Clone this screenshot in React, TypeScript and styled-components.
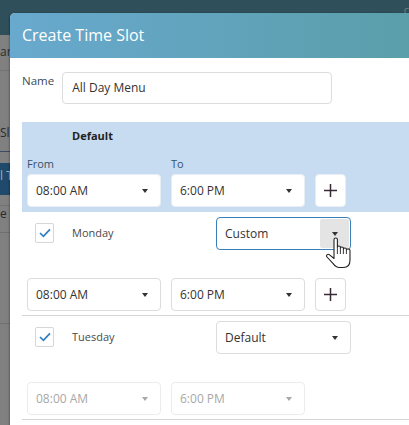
import React from 'react'
import styled, { createGlobalStyle } from 'styled-components'

const GlobalStyle = createGlobalStyle`
  html, body {
    margin: 0;
    padding: 0;
    background: #808080;
    font-family: 'Open Sans', 'Noto Sans', sans-serif;
  }
  * { box-sizing: border-box; }
`

const Page = styled.div`
  position: relative;
  width: 409px;
  height: 425px;
  overflow: hidden;
  background: #808080;
`

/* dimmed page behind the modal */
const TopBar = styled.div`
  height: 35px;
  background: #2f505b;
  display: flex;
  justify-content: flex-end;
  color: #6f8286;
  font-size: 11px;
  line-height: 20px;
`

const BackRow = styled.div<{ $h: number; $bg?: string; $line?: string }>`
  height: ${p => p.$h}px;
  background: ${p => p.$bg || 'transparent'};
  border-bottom: 1px solid ${p => p.$line || 'transparent'};
  font-size: 12px;
  color: ${p => (p.$bg ? '#9fb0bd' : '#2b2b2b')};
  display: flex;
  align-items: flex-end;
  padding-bottom: 10px;
  white-space: nowrap;
  overflow: hidden;
`

const Modal = styled.div`
  position: absolute;
  left: 10px;
  top: 13px;
  width: 420px;
  height: 440px;
  background: #fff;
  border-radius: 5px 0 0 0;
  box-shadow: -1px 0 2px rgba(0, 0, 0, 0.25);
`

const ModalHeader = styled.div`
  height: 45px;
  border-radius: 5px 0 0 0;
  background: linear-gradient(90deg, #68a9ce 0%, #5a9ea8 100%);
  color: #fff;
  font-size: 16px;
  line-height: 45px;
  padding-left: 12px;
`

const ModalBody = styled.div`
  padding: 14px 0 0 12px;
`

const NameRow = styled.div`
  display: flex;
  align-items: flex-start;
  gap: 8px;
  margin-bottom: 18px;
`

const NameLabel = styled.label`
  font-size: 11.5px;
  line-height: 16px;
  margin-top: 1px;
  color: #3b4a5a;
`

const NameInput = styled.div`
  width: 270px;
  height: 32px;
  border: 1px solid #dcdcdc;
  border-radius: 4px;
  font-size: 12px;
  line-height: 30px;
  padding-left: 9px;
  color: #333;
`

const DefaultSection = styled.div`
  background: #c7dcf0;
  height: 90px;
  padding: 6px 0 0 5px;
`

const DefaultTitle = styled.div`
  font-size: 11px;
  font-weight: 700;
  line-height: 16px;
  color: #222;
  padding-left: 45px;
  margin-bottom: 13px;
`

const FieldRow = styled.div`
  display: flex;
  align-items: flex-end;
  gap: 10px;
`

const Field = styled.div`
  display: flex;
  flex-direction: column;
  width: 134px;
`

const FieldLabel = styled.span`
  font-size: 11px;
  line-height: 14px;
  margin-bottom: 3px;
  color: #36516b;
`

const Select = styled.div<{ $w?: number; $focus?: boolean; $disabled?: boolean; $filled?: boolean }>`
  position: relative;
  width: ${p => p.$w || 134}px;
  height: 33px;
  background: #fff;
  border: 1px solid ${p => (p.$focus ? '#3a7fb8' : p.$disabled ? '#ececec' : p.$filled ? '#e8eef4' : '#dcdcdc')};
  border-radius: 4px;
  display: flex;
  align-items: center;
  justify-content: space-between;
  font-size: 12px;
  padding-left: 8px;
  color: ${p => (p.$disabled ? '#a8a8a8' : '#333')};
`

const Caret = styled.span<{ $hover?: boolean; $disabled?: boolean }>`
  align-self: stretch;
  width: 29px;
  margin: 1px 1px 1px 0;
  border-radius: 2px;
  background: ${p => (p.$hover ? '#e4e4e4' : 'transparent')};
  display: flex;
  align-items: center;
  justify-content: center;
  &::after {
    content: '';
    border-left: 3.5px solid transparent;
    border-right: 3.5px solid transparent;
    border-top: 4px solid ${p => (p.$disabled ? '#a8a8a8' : '#333')};
  }
`

const PlusButton = styled.button<{ $filled?: boolean }>`
  width: 31px;
  height: 33px;
  padding: 0;
  background: #fff;
  border: 1px solid ${p => (p.$filled ? '#e8eef4' : '#dcdcdc')};
  border-radius: 4px;
  display: flex;
  align-items: center;
  justify-content: center;
  color: #3a2a35;
`

const DayBlock = styled.div<{ $gap: number }>`
  border-bottom: 1px solid #d4d4d4;
  padding: 5px 0 4px 5px;
  display: flex;
  flex-direction: column;
  gap: ${p => p.$gap}px;
`

const DayHead = styled.div`
  display: flex;
  align-items: flex-start;
`

const CheckBox = styled.span`
  width: 19px;
  height: 20px;
  margin: 6px 0 0 8px;
  border: 1px solid #d6d6d6;
  border-radius: 2px;
  display: flex;
  align-items: center;
  justify-content: center;
  color: #2f7fc4;
`

const DayName = styled.span`
  width: 162px;
  padding-left: 18px;
  font-size: 11px;
  line-height: 16px;
  margin-top: 8px;
  color: #4a4a4a;
`

const HandCursor = styled.svg`
  position: absolute;
  left: 326px;
  top: 236px;
  width: 26px;
  height: 34px;
`

const PlusIcon = ({ filled }: { filled?: boolean }) => (
  <PlusButton $filled={filled}>
    <svg width="13" height="13" viewBox="0 0 13 13">
      <path d="M6.5 0v13M0 6.5h13" stroke="currentColor" strokeWidth="1.5" fill="none" />
    </svg>
  </PlusButton>
)

const Check = () => (
  <svg width="12" height="10" viewBox="0 0 12 10">
    <path d="M1 5 4.4 8.4 11 1.4" stroke="currentColor" strokeWidth="1.7" fill="none" />
  </svg>
)

const TimeRow = ({ disabled, plus = true }: { disabled?: boolean; plus?: boolean }) => (
  <FieldRow>
    <Select $disabled={disabled}>
      08:00 AM
      <Caret $disabled={disabled} />
    </Select>
    <Select $disabled={disabled}>
      6:00 PM
      <Caret $disabled={disabled} />
    </Select>
    {plus && <PlusIcon />}
  </FieldRow>
)

const App = () => {
  return (
    <Page>
      <GlobalStyle />
      <TopBar>c</TopBar>
      <BackRow $h={36} $line="#737373">ar</BackRow>
      <BackRow $h={81} $line="#3c4a66">Sl</BackRow>
      <BackRow $h={6} />
      <BackRow $h={32} $bg="#1f4a6c">l T</BackRow>
      <BackRow $h={10} $line="#737373" />
      <BackRow $h={27} $line="#707070">e</BackRow>
      <BackRow $h={91} $line="#707070" />

      <Modal>
        <ModalHeader>Create Time Slot</ModalHeader>
        <ModalBody>
          <NameRow>
            <NameLabel>Name</NameLabel>
            <NameInput>All Day Menu</NameInput>
          </NameRow>
          <DefaultSection>
            <DefaultTitle>Default</DefaultTitle>
            <FieldRow>
              <Field>
                <FieldLabel>From</FieldLabel>
                <Select $filled>
                  08:00 AM
                  <Caret />
                </Select>
              </Field>
              <Field>
                <FieldLabel>To</FieldLabel>
                <Select $filled>
                  6:00 PM
                  <Caret />
                </Select>
              </Field>
              <PlusIcon filled />
            </FieldRow>
          </DefaultSection>
          <DayBlock $gap={28}>
            <DayHead>
              <CheckBox><Check /></CheckBox>
              <DayName>Monday</DayName>
              <Select $w={135} $focus>
                Custom
                <Caret $hover />
              </Select>
            </DayHead>
            <TimeRow />
          </DayBlock>
          <DayBlock $gap={28}>
            <DayHead>
              <CheckBox><Check /></CheckBox>
              <DayName>Tuesday</DayName>
              <Select $w={135}>
                Default
                <Caret />
              </Select>
            </DayHead>
            <TimeRow disabled plus={false} />
          </DayBlock>
        </ModalBody>
      </Modal>

      <HandCursor viewBox="0 0 26 34">
        <path
          d="M8 3.5c0-2 3.4-2 3.4 0v7.5c0-1.4 3-1.4 3 0v1c0-1.4 3-1.4 3 0v1c0-1.4 3-1.4 3 0v.8c0-1.2 3.6-1 3.6.6v9.6c0 4.5-2.4 7.5-6.6 7.5h-4c-3 0-4.6-1.6-6-3.6L1 21c-1.3-2 .9-3.6 2.6-2.2L8 22.5z"
          fill="#fff"
          stroke="#222"
          strokeWidth="1.1"
          strokeLinejoin="round"
        />
        <path d="M11.4 11v7M14.4 12v6M17.4 13v5M20.4 14v4" stroke="#222" strokeWidth="0.9" fill="none" />
      </HandCursor>
    </Page>
  )
}

export default App
